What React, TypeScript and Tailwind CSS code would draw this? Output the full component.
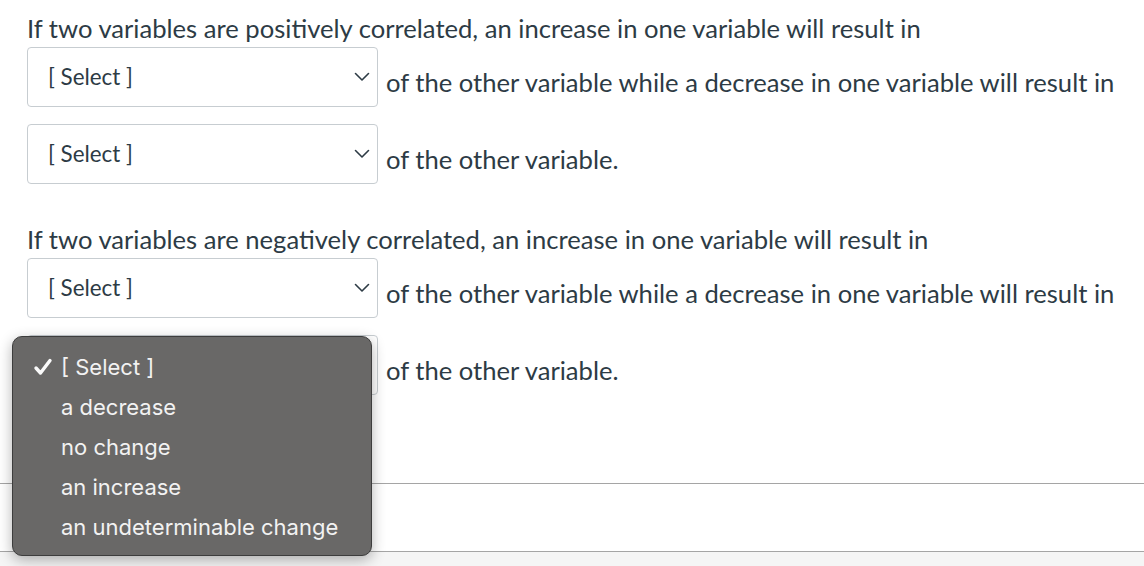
// Quiz prompt with inline dropdowns (one of them open)
const OPTIONS = ["a decrease", "no change", "an increase", "an undeterminable change"];

function SelectBox() {
  return (
    <div className="flex h-[60px] w-[351px] shrink-0 items-start justify-between rounded-[4px] border border-[#c7cdd1] bg-white pl-[20px] pr-[7px] pt-[14px]">
      <span className="text-[22.4px] leading-[30px] text-[#2d3b45]">[ Select ]</span>
      <svg width="16" height="10" viewBox="0 0 16 10" fill="none" className="mt-[10px]">
        <path d="M1.5 1.5 L8 8 L14.5 1.5" stroke="#2d3b45" strokeWidth="1.6" strokeLinecap="round" strokeLinejoin="round" />
      </svg>
    </div>
  );
}

function Row({ text }: { text: string }) {
  return (
    <div className="flex items-start gap-[8px]">
      <SelectBox />
      <span className="pt-[19px] text-[25.6px] leading-[33px] whitespace-nowrap">{text}</span>
    </div>
  );
}

function Question({ kind }: { kind: string }) {
  return (
    <div className="flex flex-col">
      <p className="text-[25.6px] leading-[33px] whitespace-nowrap">
        If two variables are {kind} correlated, an increase in one variable will result in
      </p>
      <div className="mt-[2px] flex flex-col gap-[17px]">
        <Row text="of the other variable while a decrease in one variable will result in" />
        <Row text="of the other variable." />
      </div>
    </div>
  );
}

export default function App() {
  return (
    <div
      className="relative flex h-[566px] w-[1144px] flex-col overflow-hidden bg-white text-[#2d3b45]"
      style={{ fontFamily: "Lato, 'Open Sans', sans-serif" }}
    >
      <div className="flex flex-col gap-[39px] pl-[27px] pt-[12px]">
        <Question kind="positively" />
        <Question kind="negatively" />
      </div>
      <div className="mt-[88px] h-[69px] border-y border-[#a5a5a5]" />
      <div className="flex-1 bg-[#f5f5f5]" />

      <div
        className="absolute left-[12px] top-[336px] h-[220px] w-[360px] rounded-[10px] border border-[#3d3d3d] bg-[#696867] pt-[10px] shadow-[0_4px_14px_rgba(0,0,0,0.3)]"
        style={{ fontFamily: "Inter, 'Liberation Sans', sans-serif" }}
      >
        <div className="flex h-[40px] items-center text-[22px] text-[#f2f2f2]">
          <span className="flex w-[48px] justify-end pr-[8px]">
            <svg width="20" height="20" viewBox="0 0 20 20" fill="none">
              <path d="M3 11 L7.5 16 L17 3.5" stroke="#fafafa" strokeWidth="3.4" strokeLinecap="round" strokeLinejoin="round" />
            </svg>
          </span>
          <span>[ Select ]</span>
        </div>
        {OPTIONS.map((o) => (
          <div key={o} className="flex h-[40px] items-center pl-[48px] text-[22px] text-[#f2f2f2]">
            {o}
          </div>
        ))}
      </div>
    </div>
  );
}
